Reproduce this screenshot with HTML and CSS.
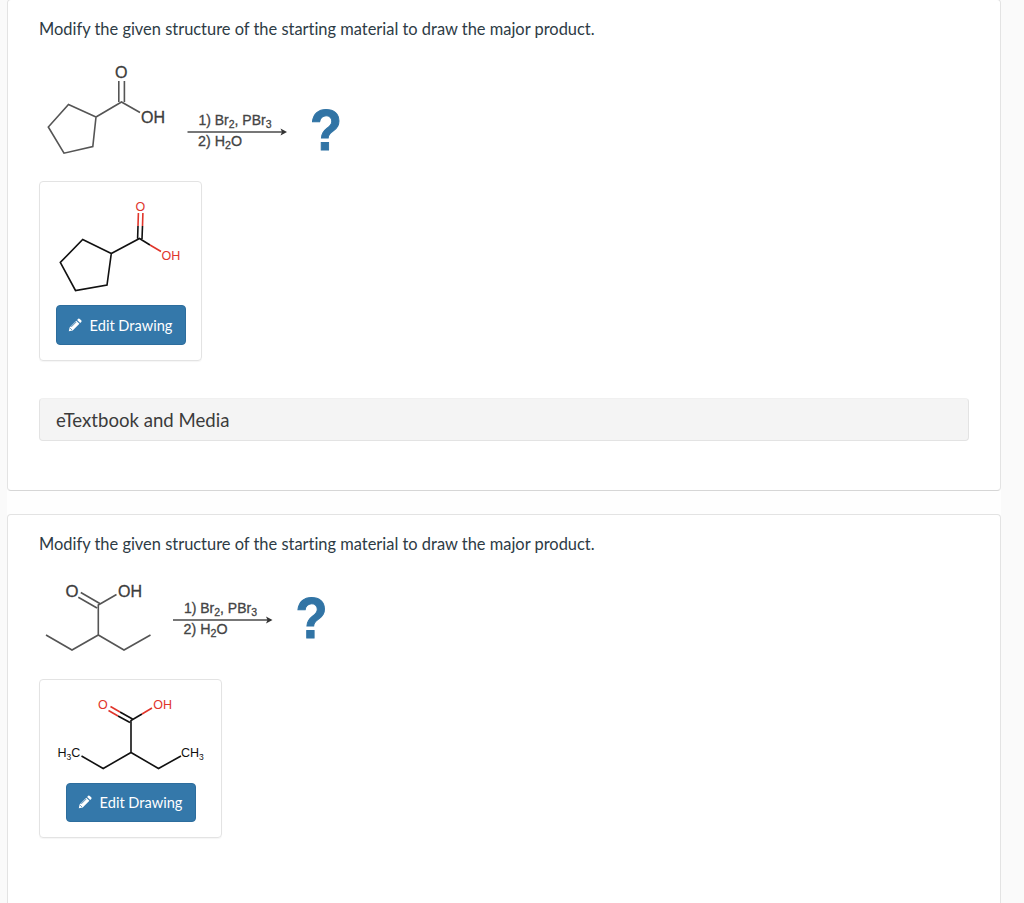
FILE: index.html
```html
<!DOCTYPE html>
<html lang="en">
<head>
    <meta charset="UTF-8">
    <meta name="viewport" content="width=device-width, initial-scale=1.0">
    <title>Assignment</title>
    <link rel="stylesheet" href="styles.css">
</head>
<body>
    <div class="container">
        <section class="question">
            <p>Modify the given structure of the starting material to draw the major product.</p>
            <svg class="reaction reaction-ring" width="320" height="110" viewBox="39 55 320 110">
                <g class="bonds">
                    <path d="M96 117L68.500 104.500L48.300 127L64 153.200L92.800 146.500ZL121.500 102L140 112.500M118.800 81V102M124.400 81V102"/>
                </g>
                <text class="atom" x="115" y="78" textLength="12.500" lengthAdjust="spacingAndGlyphs">O</text>
                <text class="atom" x="141" y="123.200" textLength="24" lengthAdjust="spacingAndGlyphs">OH</text>
                <text class="reagent" x="198.500" y="125" textLength="73" lengthAdjust="spacingAndGlyphs">1) Br<tspan class="sub" dy="3">2</tspan><tspan dy="-3">, PBr</tspan><tspan class="sub" dy="3">3</tspan></text>
                <text class="reagent" x="198" y="145.500" textLength="44" lengthAdjust="spacingAndGlyphs">2) H<tspan class="sub" dy="3">2</tspan><tspan dy="-3">O</tspan></text>
                <path class="arrow" d="M187.500 132H285"/>
                <path class="arrow-head" d="M280.500 128.500L287 132L280.500 135.500L282 132Z"/>
                <text class="mark" x="310" y="149.500" textLength="32" lengthAdjust="spacingAndGlyphs">?</text>
            </svg>
            <div class="drawing">
                <svg width="129" height="107" viewBox="56 198 129 107">
                    <path class="carbon" d="M111.300 253.500L82.700 239.500L60.300 262.500L75.500 290.500L107 285ZL139.500 238.500L150 245M137.600 238.500L138 226M142 239L142.500 226"/>
                    <path class="oxygen" d="M150 245L161 251.500M138 226L138.400 213M142.500 226L142.900 213"/>
                    <text class="label red" x="135.500" y="211">O</text>
                    <text class="label red" x="161.500" y="260">OH</text>
                </svg>
                <button type="button" class="edit-ring">
                    <svg width="14" height="14" viewBox="0 0 14 14">
                        <path d="M.8 13.300L1.600 9.400L8.300 2.700L11.400 5.800L4.700 12.500ZM9.100 1.900L10.200.8Q11 .1 11.800.9L13.200 2.300Q14 3.100 13.300 3.900L12.200 5Z"/>
                        <path class="pencil-cut" d="M2.200 10.200L3.900 11.900M3.300 8.900L8.300 3.900"/>
                    </svg>
                    <span>Edit Drawing</span>
                </button>
            </div>
            <div class="resources">eTextbook and Media</div>
        </section>

        <section class="question">
            <p>Modify the given structure of the starting material to draw the major product.</p>
            <svg class="reaction reaction-chain" width="320" height="90" viewBox="39 572 320 90">
                <g class="bonds">
                    <path d="M46 635L72 650L98.300 635L124 650L150.500 635M98.300 635V605L116.500 594.500M80.800 592.500L99.800 603.500M78.300 597.300L97 608"/>
                </g>
                <text class="atom" x="65.500" y="596.800" textLength="13" lengthAdjust="spacingAndGlyphs">O</text>
                <text class="atom" x="118" y="596.800" textLength="24" lengthAdjust="spacingAndGlyphs">OH</text>
                <text class="reagent" x="184" y="613" textLength="73" lengthAdjust="spacingAndGlyphs">1) Br<tspan class="sub" dy="3">2</tspan><tspan dy="-3">, PBr</tspan><tspan class="sub" dy="3">3</tspan></text>
                <text class="reagent" x="183.500" y="633.500" textLength="44" lengthAdjust="spacingAndGlyphs">2) H<tspan class="sub" dy="3">2</tspan><tspan dy="-3">O</tspan></text>
                <path class="arrow" d="M173 620H271"/>
                <path class="arrow-head" d="M266 616.500L272.500 620L266 623.500L267.500 620Z"/>
                <text class="mark" x="295.500" y="637.500" textLength="32" lengthAdjust="spacingAndGlyphs">?</text>
            </svg>
            <div class="drawing">
                <svg width="149" height="87" viewBox="56 696 149 87">
                    <path class="carbon" d="M81.500 756L103.200 768.500L131 752.500L158.500 768.500L181 756M131 752.500V720.500L142 714M120 712L132.500 719M118 716L130 722.500"/>
                    <path class="oxygen" d="M142 714L152 708M120 712L110.500 706.500M118 716L108.500 710.500"/>
                    <text class="label red" x="98" y="709.300">O</text>
                    <text class="label red" x="153.300" y="709.300">OH</text>
                    <text class="label" x="57.500" y="757">H<tspan class="label-sub" dy="3">3</tspan><tspan dy="-3">C</tspan></text>
                    <text class="label" x="181" y="757">CH<tspan class="label-sub" dy="3">3</tspan></text>
                </svg>
                <button type="button">
                    <svg width="14" height="14" viewBox="0 0 14 14">
                        <path d="M.8 13.300L1.600 9.400L8.300 2.700L11.400 5.800L4.700 12.500ZM9.100 1.900L10.200.8Q11 .1 11.800.9L13.200 2.300Q14 3.100 13.300 3.900L12.200 5Z"/>
                        <path class="pencil-cut" d="M2.200 10.200L3.900 11.900M3.300 8.900L8.300 3.900"/>
                    </svg>
                    <span>Edit Drawing</span>
                </button>
            </div>
        </section>
    </div>
</body>
</html>
```
FILE: styles.css
```css
* {
    box-sizing: border-box;
}

body {
    margin: 0;
    background-color: #fafafa;
    font-family: Lato, sans-serif;
    font-variant-ligatures: none;
}

.container {
    width: 994px;
    margin-left: 7px;
    background-color: #fefefe;
}

.question {
    height: 492px;
    margin-top: -1px;
    margin-bottom: 23px;
    padding: 17px 31px 0;
    background-color: #fff;
    border: 1px solid #e3e3e3;
    border-bottom-color: #d6d6d6;
    border-radius: 4px;
}

.question + .question {
    height: 389px;
    margin-top: 0;
    margin-bottom: 0;
    border-bottom: none;
    border-radius: 4px 4px 0 0;
}

p {
    margin: 0;
    line-height: 24px;
    font-size: 16.43px;
    color: #2d3b45;
}

svg {
    display: block;
}

.reaction {
    margin-top: 14px;
    margin-bottom: 16px;
    font-family: "Liberation Sans", Arial, sans-serif;
}

.reaction-chain {
    margin-top: 16px;
    margin-bottom: 17px;
}

.bonds {
    fill: none;
    stroke: #555;
    stroke-width: 1.6;
}

.atom {
    font-size: 16px;
    fill: #3c3c3c;
    stroke: #3c3c3c;
    stroke-width: 0.3;
}

.reagent {
    font-size: 14px;
    fill: #444;
    stroke: #444;
    stroke-width: 0.3;
}

.sub {
    font-size: 10.5px;
}

.arrow {
    stroke: #4a4a4a;
    stroke-width: 1.6;
}

.arrow-head {
    fill: #333;
}

.mark {
    font-size: 58px;
    font-weight: bold;
    fill: #3174a5;
    stroke: #3174a5;
    stroke-width: 1;
}

.drawing {
    width: fit-content;
    padding: 16px 16px 15px;
    display: flex;
    flex-direction: column;
    align-items: center;
    border: 1px solid #e3e3e3;
    border-radius: 4px;
    box-shadow: 0 1px 1px rgba(0, 0, 0, 0.04);
}

.carbon, .oxygen {
    fill: none;
    stroke: #111;
    stroke-width: 1.6;
}

.oxygen {
    stroke: #e0352b;
}

.label {
    font-family: "Liberation Sans", Arial, sans-serif;
    font-size: 12.5px;
    fill: #111;
}

.label-sub {
    font-size: 8.5px;
}

.red {
    fill: #e0352b;
}

button {
    width: 130px;
    height: 39px;
    margin: 0 -1px;
    padding: 0 1px 1px 0;
    display: flex;
    justify-content: center;
    align-items: center;
    gap: 8px;
    background-color: #3478aa;
    color: #fff;
    border: 1px solid #2d6d9d;
    border-radius: 4px;
    font-family: Lato, sans-serif;
    font-size: 14.6px;
    font-variant-ligatures: none;
    cursor: pointer;
}

.edit-ring {
    height: 40px;
    padding-bottom: 0;
}

button svg {
    fill: #fff;
}

.pencil-cut {
    stroke: #3478aa;
    stroke-width: 0.8;
}

.resources {
    height: 43px;
    margin-top: 37px;
    padding-left: 16px;
    line-height: 43px;
    font-size: 18.6px;
    color: #3b3b3b;
    background-color: #f4f4f4;
    border: 1px solid #e3e3e3;
    border-top-color: #f0f0f0;
    border-radius: 4px;
}
```
